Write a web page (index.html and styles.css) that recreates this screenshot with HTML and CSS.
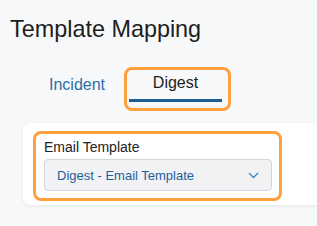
FILE: index.html
```html
<!DOCTYPE html>
<html>
<head>
<meta charset="utf-8">
<link rel="stylesheet" href="styles.css">
</head>
<body>
<div class="page">
  <h1 class="title">Template Mapping</h1>
  <div class="tabs">
    <div class="tab tab-idle">Incident</div>
    <div class="focus-ring tab-ring">
      <div class="tab tab-active">Digest</div>
    </div>
  </div>
  <div class="card">
    <div class="focus-ring field-ring">
      <div class="field-label">Email Template</div>
      <div class="select">
        <span class="select-value">Digest - Email Template</span>
        <svg class="chevron" width="11" height="7" viewBox="0 0 11 7"><polyline points="1,1 5.5,5.5 10,1" fill="none" stroke="#3f82bf" stroke-width="1.3"/></svg>
      </div>
    </div>
  </div>
</div>
</body>
</html>
```
FILE: styles.css
```css
html, body {
  margin: 0;
  padding: 0;
  background: #f7f8fa;
  overflow: hidden;
  width: 317px;
  height: 226px;
}
.page {
  font-family: "Liberation Sans", Arial, sans-serif;
  padding-top: 16px;
}
.title {
  margin: 0 0 0 10px;
  font-size: 23.4px;
  font-weight: normal;
  line-height: 26px;
  color: #1e1e20;
}
.tabs {
  display: flex;
  align-items: flex-start;
  margin-top: 25px;
  padding-left: 25px;
}
.tab {
  font-size: 16px;
  line-height: 18px;
}
.tab-idle {
  color: #2b6ea6;
  padding: 9px 19px 0 24px;
}
.focus-ring {
  border: 3px solid #ffa03c;
  border-radius: 8px;
}
.tab-ring {
  padding: 2px 6px 6px 2px;
}
.tab-active {
  color: #1e1e20;
  width: 93px;
  text-align: center;
  padding-top: 2px;
  padding-bottom: 7px;
  border-bottom: 3px solid #1b5e96;
}
.card {
  margin-top: 12px;
  margin-left: 23px;
  background: #ffffff;
  border-radius: 8px 0 0 8px;
  box-shadow: 0 1px 4px rgba(0, 0, 0, 0.07);
  padding: 8px 0 4px 10px;
}
.field-ring {
  width: 249px;
  box-sizing: border-box;
  padding: 5px 7px 7px 8px;
}
.field-label {
  font-size: 14px;
  line-height: 16px;
  color: #222;
  margin-bottom: 4px;
}
.select {
  display: flex;
  align-items: center;
  justify-content: space-between;
  height: 32px;
  box-sizing: border-box;
  border: 1px solid #d3d6da;
  border-radius: 4px;
  background: #f0f2f4;
  padding: 0 12px 0 12px;
}
.select-value {
  font-size: 13px;
  color: #1f5f99;
}
.chevron {
  display: block;
}
```
